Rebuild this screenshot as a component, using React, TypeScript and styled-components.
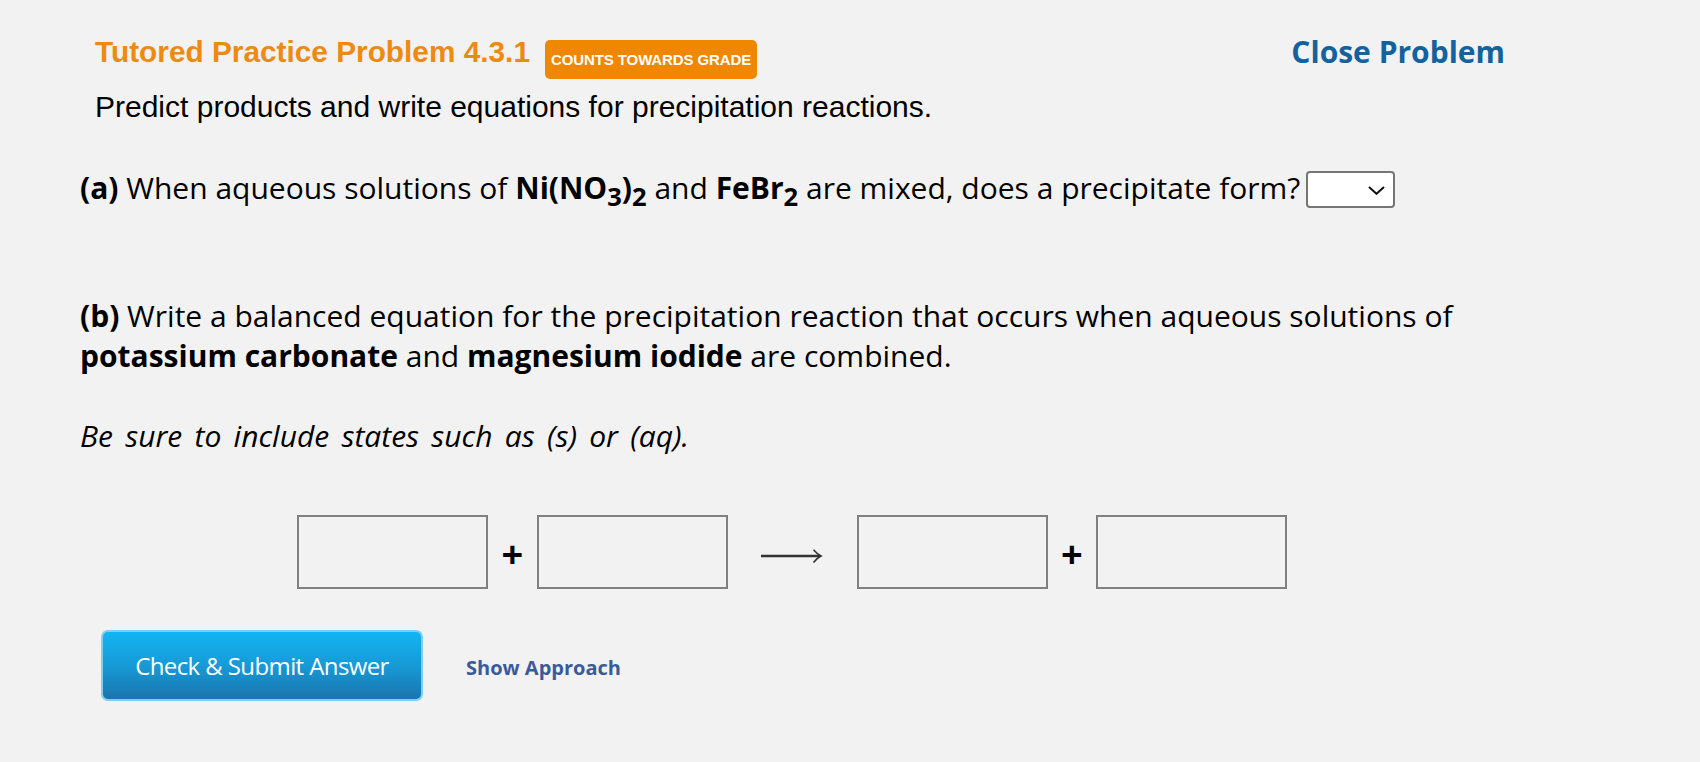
import React from 'react'
import styled, { createGlobalStyle } from 'styled-components'

const GlobalStyle = createGlobalStyle`
  html, body {
    margin: 0;
    padding: 0;
    background: #f2f2f2;
  }
  #root {
    min-height: 100vh;
  }
`

function App() {
  return (
    <>
      <GlobalStyle />
      <Page>
        <Header>
          <TitleGroup>
            <Title>Tutored Practice Problem 4.3.1</Title>
            <Badge>COUNTS TOWARDS GRADE</Badge>
          </TitleGroup>
          <CloseLink>Close Problem</CloseLink>
        </Header>
        <Intro>Predict products and write equations for precipitation reactions.</Intro>

        <Question>
          <b>(a)</b> When aqueous solutions of{' '}
          <b>
            Ni(NO<Sub>3</Sub>)<Sub>2</Sub>
          </b>{' '}
          and{' '}
          <b>
            FeBr<Sub>2</Sub>
          </b>{' '}
          are mixed, does a precipitate form?{' '}
          <SelectBox>
            <Chevron width="17" height="9" viewBox="0 0 17 9">
              <polyline
                points="1,1 8.5,7.8 16,1"
                fill="none"
                stroke="#111"
                strokeWidth="2"
              />
            </Chevron>
          </SelectBox>
        </Question>

        <QuestionB>
          <b>(b)</b> Write a balanced equation for the precipitation reaction that
          occurs when aqueous solutions of <b>potassium carbonate</b> and{' '}
          <b>magnesium iodide</b> are combined.
        </QuestionB>

        <Hint>Be sure to include states such as (s) or (aq).</Hint>

        <Equation>
          <AnswerBox />
          <Plus>+</Plus>
          <AnswerBox />
          <ArrowSlot>
            <svg width="62" height="22" viewBox="0 0 62 22">
              <line x1="0" y1="15" x2="59" y2="15" stroke="#333" strokeWidth="2.6" />
              <path
                d="M52.5 8.8 Q56 13 60 15 Q56 17 52.5 21.4"
                fill="none"
                stroke="#333"
                strokeWidth="1.6"
              />
            </svg>
          </ArrowSlot>
          <AnswerBox />
          <Plus>+</Plus>
          <AnswerBox />
        </Equation>

        <Actions>
          <SubmitButton>Check &amp; Submit Answer</SubmitButton>
          <ApproachLink>Show Approach</ApproachLink>
        </Actions>
      </Page>
    </>
  )
}

export default App

const Page = styled.div`
  margin-left: 80px;
  width: 1440px;
  padding-top: 31px;
  font-family: 'Open Sans', sans-serif;
  color: #000;
`

const Header = styled.div`
  display: flex;
  justify-content: space-between;
  align-items: flex-start;
  padding: 0 15px;
`

const TitleGroup = styled.div`
  display: flex;
  align-items: flex-start;
`

const Title = styled.h1`
  margin: 3.5px 0 0;
  font-family: 'Liberation Sans', Arial, sans-serif;
  font-weight: bold;
  font-size: 29.8px;
  line-height: 34px;
  color: #ee8a10;
`

const Badge = styled.span`
  margin: 9px 0 0 15px;
  height: 39px;
  padding: 0 6px;
  display: flex;
  align-items: center;
  border-radius: 5px;
  background: #ef8800;
  color: #fff;
  font-family: 'Liberation Sans', Arial, sans-serif;
  font-weight: bold;
  font-size: 15px;
  letter-spacing: -0.1px;
`

const CloseLink = styled.a`
  font-family: 'Open Sans', sans-serif;
  font-weight: 700;
  font-size: 30px;
  line-height: 41px;
  color: #12639d;
  cursor: pointer;
`

const Intro = styled.p`
  margin: 11px 0 0;
  padding-left: 15px;
  font-family: 'Liberation Sans', Arial, sans-serif;
  font-size: 30px;
  line-height: 34px;
`

const Question = styled.p`
  margin: 44px 0 0;
  width: 1390px;
  font-size: 30px;
  line-height: 40px;
`

const Sub = styled.sub`
  font-size: 0.85em;
  vertical-align: -0.28em;
  line-height: 0;
`

const SelectBox = styled.span`
  display: inline-block;
  overflow: hidden;
  box-sizing: border-box;
  width: 89px;
  height: 37px;
  margin-left: -2px;
  vertical-align: -9px;
  background: #fff;
  border: 2px solid #767676;
  border-radius: 4px;
  line-height: 0;
`

const Chevron = styled.svg`
  display: block;
  margin: 13px 0 0 60px;
`

const QuestionB = styled.p`
  margin: 88px 0 0;
  width: 1390px;
  font-size: 30px;
  line-height: 40px;
`

const Hint = styled.p`
  margin: 40px 0 0;
  font-size: 30px;
  line-height: 40px;
  font-style: italic;
  word-spacing: 4.5px;
`

const Equation = styled.div`
  display: flex;
  align-items: center;
  margin-top: 59px;
  padding-left: 217px;
`

const AnswerBox = styled.div`
  box-sizing: border-box;
  width: 191px;
  height: 74px;
  border: 2px solid #808080;
  background: #f2f2f2;
`

const Plus = styled.span`
  width: 48.6px;
  text-align: center;
  font-family: 'Open Sans', sans-serif;
  font-weight: 700;
  font-size: 38px;
  line-height: 1;
  padding-top: 2px;
`

const ArrowSlot = styled.div`
  width: 129px;
  display: flex;
  justify-content: center;
`

const Actions = styled.div`
  display: flex;
  align-items: center;
  margin-top: 41px;
  padding-left: 21px;
`

const SubmitButton = styled.button`
  box-sizing: border-box;
  width: 322px;
  height: 71px;
  border: 2px solid #7fcdf3;
  border-radius: 7px;
  background: linear-gradient(to bottom, #12b4f1 0%, #179ad6 50%, #1a75ad 100%);
  color: #fff;
  font-family: 'Open Sans', sans-serif;
  font-size: 24px;
  letter-spacing: -0.6px;
  cursor: pointer;
`

const ApproachLink = styled.a`
  margin-left: 43px;
  padding-top: 3px;
  font-family: 'Open Sans', sans-serif;
  font-weight: 700;
  font-size: 20px;
  color: #3a5a9c;
  cursor: pointer;
`
